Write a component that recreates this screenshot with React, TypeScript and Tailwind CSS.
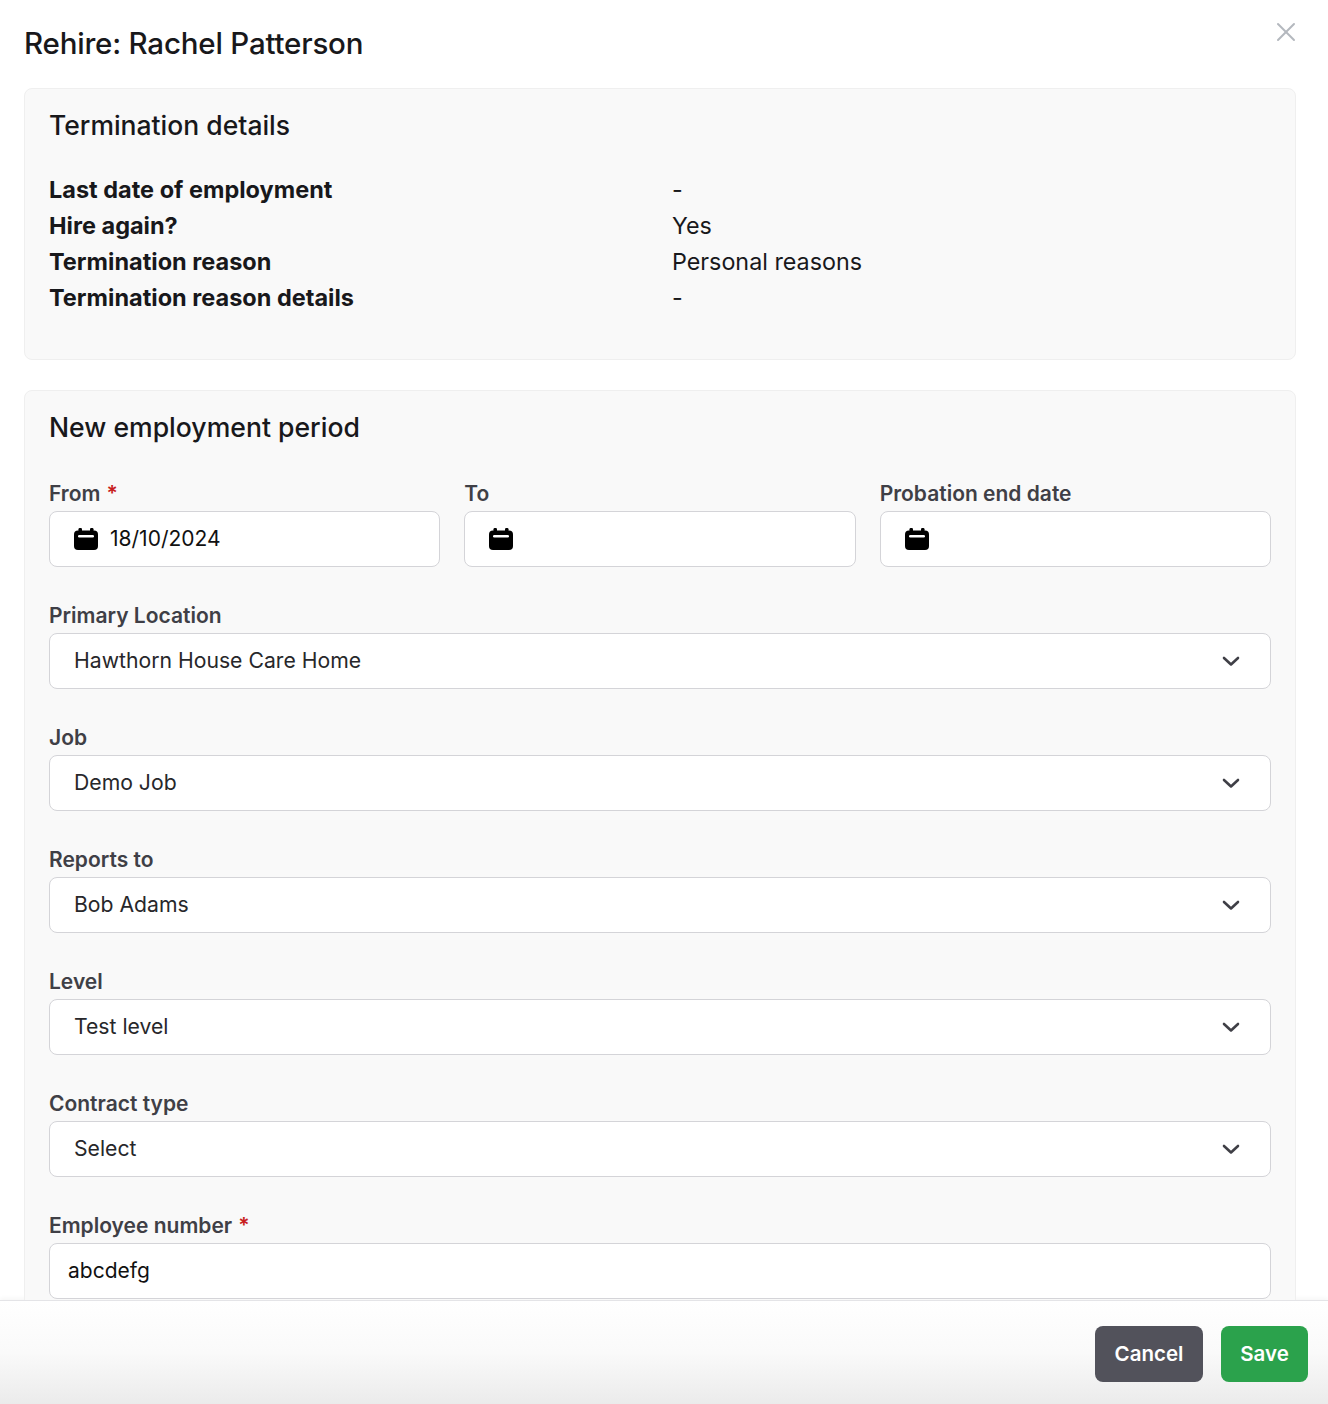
import React from "react";

const CalIcon = () => (
  <svg width="24" height="22" viewBox="0 0 24 22" className="shrink-0">
    <rect x="4.5" y="0" width="3.5" height="5" rx="1.2" fill="#000" />
    <rect x="16" y="0" width="3.5" height="5" rx="1.2" fill="#000" />
    <rect x="0" y="2.5" width="24" height="19.5" rx="4" fill="#000" />
    <rect x="4" y="7" width="16" height="2.6" rx="1.3" fill="#fff" />
  </svg>
);

const Chevron = () => (
  <svg width="18" height="12" viewBox="0 0 18 12" className="shrink-0">
    <polyline points="2,3 9,9.5 16,3" fill="none" stroke="#3f3f46" strokeWidth="2.6" strokeLinecap="round" strokeLinejoin="round" />
  </svg>
);

const Label = ({ children, required }: { children: React.ReactNode; required?: boolean }) => (
  <div className="text-[21px] leading-[24px] font-semibold text-[#3f3f46] pt-[1px] mb-[5px]">
    {children}
    {required && <span className="text-[#c81e1e] ml-[6px]">*</span>}
  </div>
);

const DateInput = ({ value }: { value?: string }) => (
  <div className="h-[56px] bg-white border border-[#d4d4d8] rounded-[8px] flex items-center pl-[24px] gap-[12px]">
    <CalIcon />
    {value && <span className="text-[21px] text-[#111]">{value}</span>}
  </div>
);

const Select = ({ value }: { value: string }) => (
  <div className="h-[56px] bg-white border border-[#d4d4d8] rounded-[8px] flex items-center justify-between pl-[24px] pr-[30px]">
    <span className="text-[21.2px] text-[#27272a]">{value}</span>
    <Chevron />
  </div>
);

export default function App() {
  const details: [string, string][] = [
    ["Last date of employment", "-"],
    ["Hire again?", "Yes"],
    ["Termination reason", "Personal reasons"],
    ["Termination reason details", "-"],
  ];
  return (
    <div className="h-[1404px] w-full bg-white flex flex-col overflow-hidden font-['Inter',sans-serif] text-[#18181b]">
      <div className="flex-1 overflow-hidden pl-[24px] pr-[32px] relative">
        <button className="absolute right-[32px] top-[22px] text-[#b4b8be]">
          <svg width="20" height="20" viewBox="0 0 20 20">
            <line x1="2" y1="2" x2="18" y2="18" stroke="currentColor" strokeWidth="2" strokeLinecap="round" />
            <line x1="18" y1="2" x2="2" y2="18" stroke="currentColor" strokeWidth="2" strokeLinecap="round" />
          </svg>
        </button>
        <h1 className="text-[29.5px] leading-[34px] font-medium pt-[26px] pb-[28px] tracking-[-0.2px]">Rehire: Rachel Patterson</h1>

        <section className="bg-[#f9f9f9] border border-[#efefef] rounded-[8px] px-[24px] pt-[20px] pb-[43px]">
          <h2 className="text-[26.5px] leading-[32px] font-medium">Termination details</h2>
          <div className="mt-[31px] grid grid-cols-2 gap-x-[24px]">
            {details.map(([k, v]) => (
              <React.Fragment key={k}>
                <div className="text-[23.5px] leading-[36px] font-bold">{k}</div>
                <div className="text-[23.3px] leading-[36px]">{v}</div>
              </React.Fragment>
            ))}
          </div>
        </section>

        <section className="mt-[30px] bg-[#f9f9f9] border border-[#efefef] rounded-[8px] px-[24px] pt-[20px] pb-[40px]">
          <h2 className="text-[26.6px] leading-[32px] font-medium">New employment period</h2>
          <div className="mt-[38px] grid grid-cols-3 gap-x-[24px]">
            <div>
              <Label required>From</Label>
              <DateInput value="18/10/2024" />
            </div>
            <div>
              <Label>To</Label>
              <DateInput />
            </div>
            <div>
              <Label>Probation end date</Label>
              <DateInput />
            </div>
          </div>
          <div className="mt-[36px]">
            <Label>Primary Location</Label>
            <Select value="Hawthorn House Care Home" />
          </div>
          <div className="mt-[36px]">
            <Label>Job</Label>
            <Select value="Demo Job" />
          </div>
          <div className="mt-[36px]">
            <Label>Reports to</Label>
            <Select value="Bob Adams" />
          </div>
          <div className="mt-[36px]">
            <Label>Level</Label>
            <Select value="Test level" />
          </div>
          <div className="mt-[36px]">
            <Label>Contract type</Label>
            <Select value="Select" />
          </div>
          <div className="mt-[36px]">
            <Label required>Employee number</Label>
            <div className="h-[56px] bg-white border border-[#d4d4d8] rounded-[8px] flex items-center pl-[18px]">
              <span className="text-[21px] text-[#111]">abcdefg</span>
            </div>
          </div>
        </section>
      </div>
      <footer className="h-[104px] shrink-0 border-t border-[#e4e4e7] shadow-[0_-2px_4px_rgba(0,0,0,0.04)] bg-gradient-to-b from-white via-[#fafafa] to-[#ebebeb] flex items-center justify-end gap-[18px] pr-[20px] pt-[3px]">
        <button className="h-[56px] w-[108px] rounded-[8px] bg-[#52525b] text-white text-[20.5px] font-semibold">Cancel</button>
        <button className="h-[56px] w-[87px] rounded-[8px] bg-[#2ba24c] text-white text-[20.5px] font-semibold">Save</button>
      </footer>
    </div>
  );
}
